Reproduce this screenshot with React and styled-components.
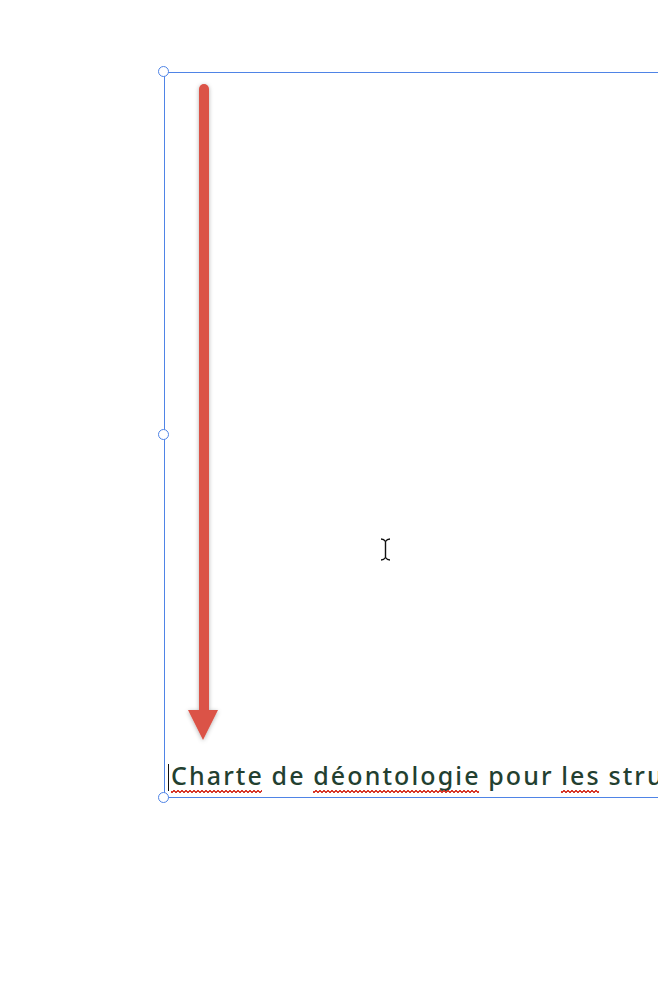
import styled, { createGlobalStyle } from "styled-components";

const Global = createGlobalStyle`
  html, body {
    margin: 0;
    padding: 0;
    background: #ffffff;
  }
`;

const Canvas = styled.div`
  position: relative;
  width: 658px;
  height: 997px;
  overflow: hidden;
  background: #fff;
`;

const Frame = styled.div`
  position: absolute;
  left: 164px;
  top: 72px;
  width: 700px;
  height: 726px;
  border: 1px solid #4f84e6;
  border-right: none;
  box-sizing: border-box;
  display: flex;
  flex-direction: column;
  justify-content: flex-end;
`;

const Line = styled.div`
  display: flex;
  align-items: flex-end;
  padding: 0 0 7px 3px;
  font-family: "Noto Sans", "Liberation Sans", sans-serif;
  font-weight: 500;
  font-size: 25px;
  line-height: 30px;
  letter-spacing: 2.1px;
  word-spacing: -1px;
  color: #233f30;
  white-space: nowrap;
`;

const Caret = styled.span`
  display: inline-block;
  flex: none;
  width: 1px;
  height: 27px;
  margin-right: 2px;
  margin-bottom: -1px;
  background: #111;
`;

const Word = styled.span`
  position: relative;

  &::after {
    content: "";
    display: ${(p) => (p.$misspelt ? "block" : "none")};
    position: absolute;
    left: 0;
    right: 2px;
    bottom: -3px;
    height: 3px;
    background:
      linear-gradient(135deg, transparent 40%, #d8392b 40%, #d8392b 60%, transparent 60%) 0 0 / 4px 3px repeat-x,
      linear-gradient(45deg, transparent 40%, #d8392b 40%, #d8392b 60%, transparent 60%) 2px 0 / 4px 3px repeat-x;
  }
`;

const Handle = styled.span`
  position: absolute;
  left: 158px;
  top: ${(p) => p.$y - 6}px;
  width: 9px;
  height: 9px;
  border: 1.5px solid #4f84e6;
  border-radius: 50%;
  background: #fff;
`;

const Arrow = styled.svg`
  position: absolute;
  left: 180px;
  top: 76px;
  overflow: visible;
`;

const Cursor = styled.svg`
  position: absolute;
  left: 379px;
  top: 537px;
`;

export default function App() {
  return (
    <Canvas>
      <Global />
      <Frame>
        <Line>
          <Caret />
          <Word $misspelt>Charte</Word>&nbsp;de&nbsp;
          <Word $misspelt>déontologie</Word>&nbsp;pour&nbsp;
          <Word $misspelt>les</Word>&nbsp;structures
        </Line>
      </Frame>
      <Handle $y={72} />
      <Handle $y={435} />
      <Handle $y={798} />
      <Arrow width="50" height="680" viewBox="0 0 50 680">
        <defs>
          <filter id="sh" x="-50%" y="-5%" width="200%" height="110%">
            <feDropShadow dx="0" dy="1" stdDeviation="2" floodColor="#000" floodOpacity="0.3" />
          </filter>
        </defs>
        <g filter="url(#sh)" fill="#db5246">
          <path d="M24 13 L24 636" stroke="#db5246" strokeWidth="10" strokeLinecap="round" fill="none" />
          <path d="M8 634 L38 634 L23 664 Z" />
        </g>
      </Arrow>
      <Cursor width="14" height="26" viewBox="0 0 14 26">
        <path d="M2 2 Q5 2 6.5 4.5 Q8 2 11 2 M6.5 4.5 L6.5 20.5 M2 23 Q5 23 6.5 20.5 Q8 23 11 23" stroke="#111" strokeWidth="1.4" fill="none" />
      </Cursor>
    </Canvas>
  );
}
